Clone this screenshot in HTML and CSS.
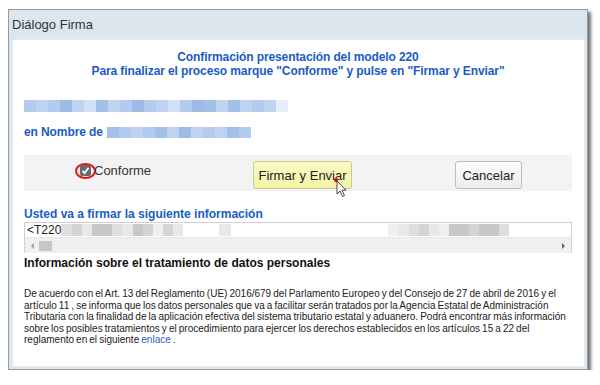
FILE: index.html
```html
<!DOCTYPE html>
<html lang="es">
<head>
    <meta charset="UTF-8">
    <meta name="viewport" content="width=device-width, initial-scale=1.0">
    <title>Diálogo Firma</title>
    <link rel="stylesheet" href="styles.css">
</head>
<body>

<div class="dialog">
    <div class="dialog-title">Diálogo Firma</div>
    <div class="dialog-body">

        <div class="heading">
            Confirmación presentación del modelo 220<br>
            Para finalizar el proceso marque "Conforme" y pulse en "Firmar y Enviar"
        </div>

        <!-- datos ocultos del declarante -->
        <div class="blur-row blur-blue name-bar">
            <span class="c2"></span><span class="c3"></span><span class="c2"></span><span class="c4"></span><span class="c3"></span><span class="c5"></span><span class="c1"></span><span class="c3"></span><span class="c2"></span><span class="c4"></span><span class="c2"></span><span class="c3"></span><span class="c5"></span><span class="c2"></span><span class="c4"></span><span class="c1"></span><span class="c3"></span><span class="c1"></span><span class="c3"></span><span class="c2"></span><span class="c3"></span><span class="c6"></span>
        </div>

        <div class="on-behalf">
            <span>en Nombre de</span>
            <div class="blur-row blur-blue behalf-bar">
                <span class="c1"></span><span class="c2"></span><span class="c3"></span><span class="c2"></span><span class="c1"></span><span class="c3"></span><span class="c4"></span><span class="c3"></span><span class="c2"></span><span class="c3"></span><span class="c1"></span><span class="c2"></span>
            </div>
        </div>

        <div class="actions">
            <label class="agree">
                <span class="check-mark">
                    <span class="checkbox"><svg width="9" height="9" viewBox="0 0 9 9"><path d="M1.5 4.8 L3.6 7 L7.6 1.8" fill="none" stroke="#fff" stroke-width="1.8"/></svg></span>
                </span>
                Conforme
            </label>
            <button class="btn btn-sign">Firmar y Enviar</button>
            <button class="btn btn-cancel">Cancelar</button>

            <svg class="pointer" width="16" height="22" viewBox="0 0 16 22">
                <path d="M2 1 L2 5 M0 3 L4 3 M0.6 1.6 L3.4 4.4 M3.4 1.6 L0.6 4.4" stroke="#e01010" stroke-width="1.4"/>
                <path d="M3 4 L3 17 L6 14 L8.5 19.5 L10.5 18.6 L8 13.2 L12 13.2 Z" fill="#fff" stroke="#333" stroke-width="0.9" stroke-linejoin="round"/>
            </svg>
        </div>

        <div class="section-title">Usted va a firmar la siguiente información</div>
        <div class="sign-box">
            <div class="sign-line">
                <span class="sign-text">&lt;T220</span>
                <div class="blur-row blur-gray">
                    <span class="g3"></span><span class="g2"></span><span class="g4"></span><span class="g1"></span><span class="g1"></span><span class="g3"></span><span class="g4"></span><span class="g1"></span><span class="g2"></span><span class="g5"></span><span class="g2"></span><span class="g4"></span>
                </div>
                <div class="blur-row blur-gray small-blur">
                    <span class="g4"></span>
                </div>
                <div class="blur-row blur-gray far-blur">
                    <span class="g5"></span><span class="g4"></span><span class="g3"></span><span class="g2"></span><span class="g4"></span><span class="g5"></span><span class="g1"></span><span class="g1"></span><span class="g2"></span><span class="g1"></span><span class="g1"></span><span class="g3"></span>
                </div>
            </div>
            <div class="hscroll">
                <span class="arrow-left"></span>
                <span class="thumb"></span>
                <span class="arrow-right"></span>
            </div>
        </div>

        <div class="privacy-title">Información sobre el tratamiento de datos personales</div>
        <p class="privacy">
            De acuerdo con el Art. 13 del Reglamento (UE) 2016/679 del Parlamento Europeo y del Consejo de 27 de abril de 2016 y el<br>
            artículo 11 , se informa que los datos personales que va a facilitar serán tratados por la Agencia Estatal de Administración<br>
            Tributaria con la finalidad de la aplicación efectiva del sistema tributario estatal y aduanero. Podrá encontrar más información<br>
            sobre los posibles tratamientos y el procedimiento para ejercer los derechos establecidos en los artículos 15 a 22 del<br>
            reglamento en el siguiente <a href="#">enlace</a> .
        </p>

    </div>
</div>

</body>
</html>
```

FILE: styles.css
```css
body {
    margin: 0;
    background: #fff;
    font-family: "Liberation Sans", Arial, sans-serif;
    color: #222;
}
.dialog {
    width: 578px;
    height: 359px;
    margin: 9px 0 0 8px;
    border: 1px solid #9a9a9a;
    background-color: #dce6ef;
    box-shadow: 3px 3px 3px rgba(0, 0, 0, 0.55);
    display: flex;
    flex-direction: column;
}
.dialog-title {
    height: 29px;
    line-height: 29px;
    padding-left: 3px;
    font-size: 13px;
    color: #333;
}
.dialog-body {
    flex: 1;
    margin: 0 2px 2px 3px;
    padding: 0 12px 0 11px;
    background-color: #fff;
    border: 1px solid #e4ebf2;
}
.heading {
    margin-top: 10px;
    text-align: center;
    font-size: 12px;
    font-weight: bold;
    line-height: 14px;
    color: #1a5cc4;
    letter-spacing: -0.1px;
}
.blur-row {
    display: flex;
}
.blur-row span {
    flex: 1;
}
.name-bar {
    width: 264px;
    height: 12px;
    margin-top: 22px;
}
.blur-blue .c1 { background-color: #a3c0e8; }
.blur-blue .c2 { background-color: #b3cbee; }
.blur-blue .c3 { background-color: #bfd3f1; }
.blur-blue .c4 { background-color: #9ebbe5; }
.blur-blue .c5 { background-color: #d2e0f5; }
.blur-blue .c6 { background-color: #e6eefa; }
.on-behalf {
    display: flex;
    align-items: center;
    gap: 4px;
    margin-top: 12px;
    height: 16px;
    font-size: 12px;
    font-weight: bold;
    color: #1a5cc4;
    letter-spacing: -0.1px;
}
.behalf-bar {
    width: 144px;
    height: 11px;
}
.actions {
    position: relative;
    display: flex;
    align-items: center;
    height: 36px;
    margin-top: 15px;
    background-color: #f3f3f3;
}
.agree {
    display: flex;
    align-items: center;
    box-sizing: border-box;
    width: 229px;
    padding-left: 51px;
    margin-top: -5px;
    font-size: 13px;
    color: #333;
}
.check-mark {
    display: flex;
    align-items: center;
    justify-content: center;
    width: 17px;
    height: 12px;
    border: 2px solid #e01818;
    border-radius: 50%;
    margin-right: -2px;
}
.checkbox {
    display: flex;
    align-items: center;
    justify-content: center;
    width: 11px;
    height: 11px;
    border-radius: 2px;
    background-color: #6a6a6a;
}
.btn {
    height: 28px;
    padding: 0;
    white-space: nowrap;
    font-family: inherit;
    font-size: 13px;
    color: #222;
    border-radius: 3px;
    cursor: pointer;
    margin-top: 4px;
}
.btn-sign {
    width: 99px;
    background: linear-gradient(#fbfbc4, #f3f3a8);
    border: 1px solid #c9c98e;
}
.btn-cancel {
    width: 67px;
    margin-left: 103px;
    background: linear-gradient(#fdfdfd, #ececec);
    border: 1px solid #bdbdbd;
}
.pointer {
    position: absolute;
    left: 310px;
    top: 22px;
}
.section-title {
    margin-top: 15px;
    height: 16px;
    line-height: 16px;
    font-size: 12px;
    font-weight: bold;
    color: #1a5cc4;
}
.sign-box {
    border: 1px solid #cfcfcf;
    height: 29px;
}
.sign-line {
    display: flex;
    height: 14px;
    font-size: 12px;
    line-height: 14px;
    color: #222;
}
.sign-text {
    padding-left: 2px;
}
.blur-gray {
    width: 122px;
    height: 12px;
    margin-top: 1px;
}
.small-blur {
    width: 12px;
    margin-left: 36px;
}
.far-blur {
    width: 121px;
    margin-left: 157px;
}
.blur-gray .g1 { background-color: #c8c8c8; }
.blur-gray .g2 { background-color: #d4d4d4; }
.blur-gray .g3 { background-color: #dedede; }
.blur-gray .g4 { background-color: #e8e8e8; }
.blur-gray .g5 { background-color: #f1eeee; }
.hscroll {
    display: flex;
    align-items: center;
    height: 15px;
    background-color: #f0f0f0;
    border-top: 1px solid #e6e6e6;
}
.arrow-left {
    width: 0;
    height: 0;
    margin-left: 6px;
    border-top: 3px solid transparent;
    border-bottom: 3px solid transparent;
    border-right: 3px solid #a0a0a0;
}
.thumb {
    width: 13px;
    height: 10px;
    margin-left: 5px;
    background-color: #c6c6c6;
}
.arrow-right {
    width: 0;
    height: 0;
    margin-left: auto;
    margin-right: 6px;
    border-top: 3px solid transparent;
    border-bottom: 3px solid transparent;
    border-left: 3px solid #606060;
}
.privacy-title {
    margin-top: 2px;
    height: 16px;
    line-height: 16px;
    font-size: 12px;
    font-weight: bold;
    color: #111;
}
.privacy {
    margin: 17px 0 0;
    font-size: 10px;
    word-spacing: -0.7px;
    line-height: 11.5px;
    white-space: nowrap;
    color: #222;
}
.privacy a {
    color: #2a64b4;
    text-decoration: none;
}
```
